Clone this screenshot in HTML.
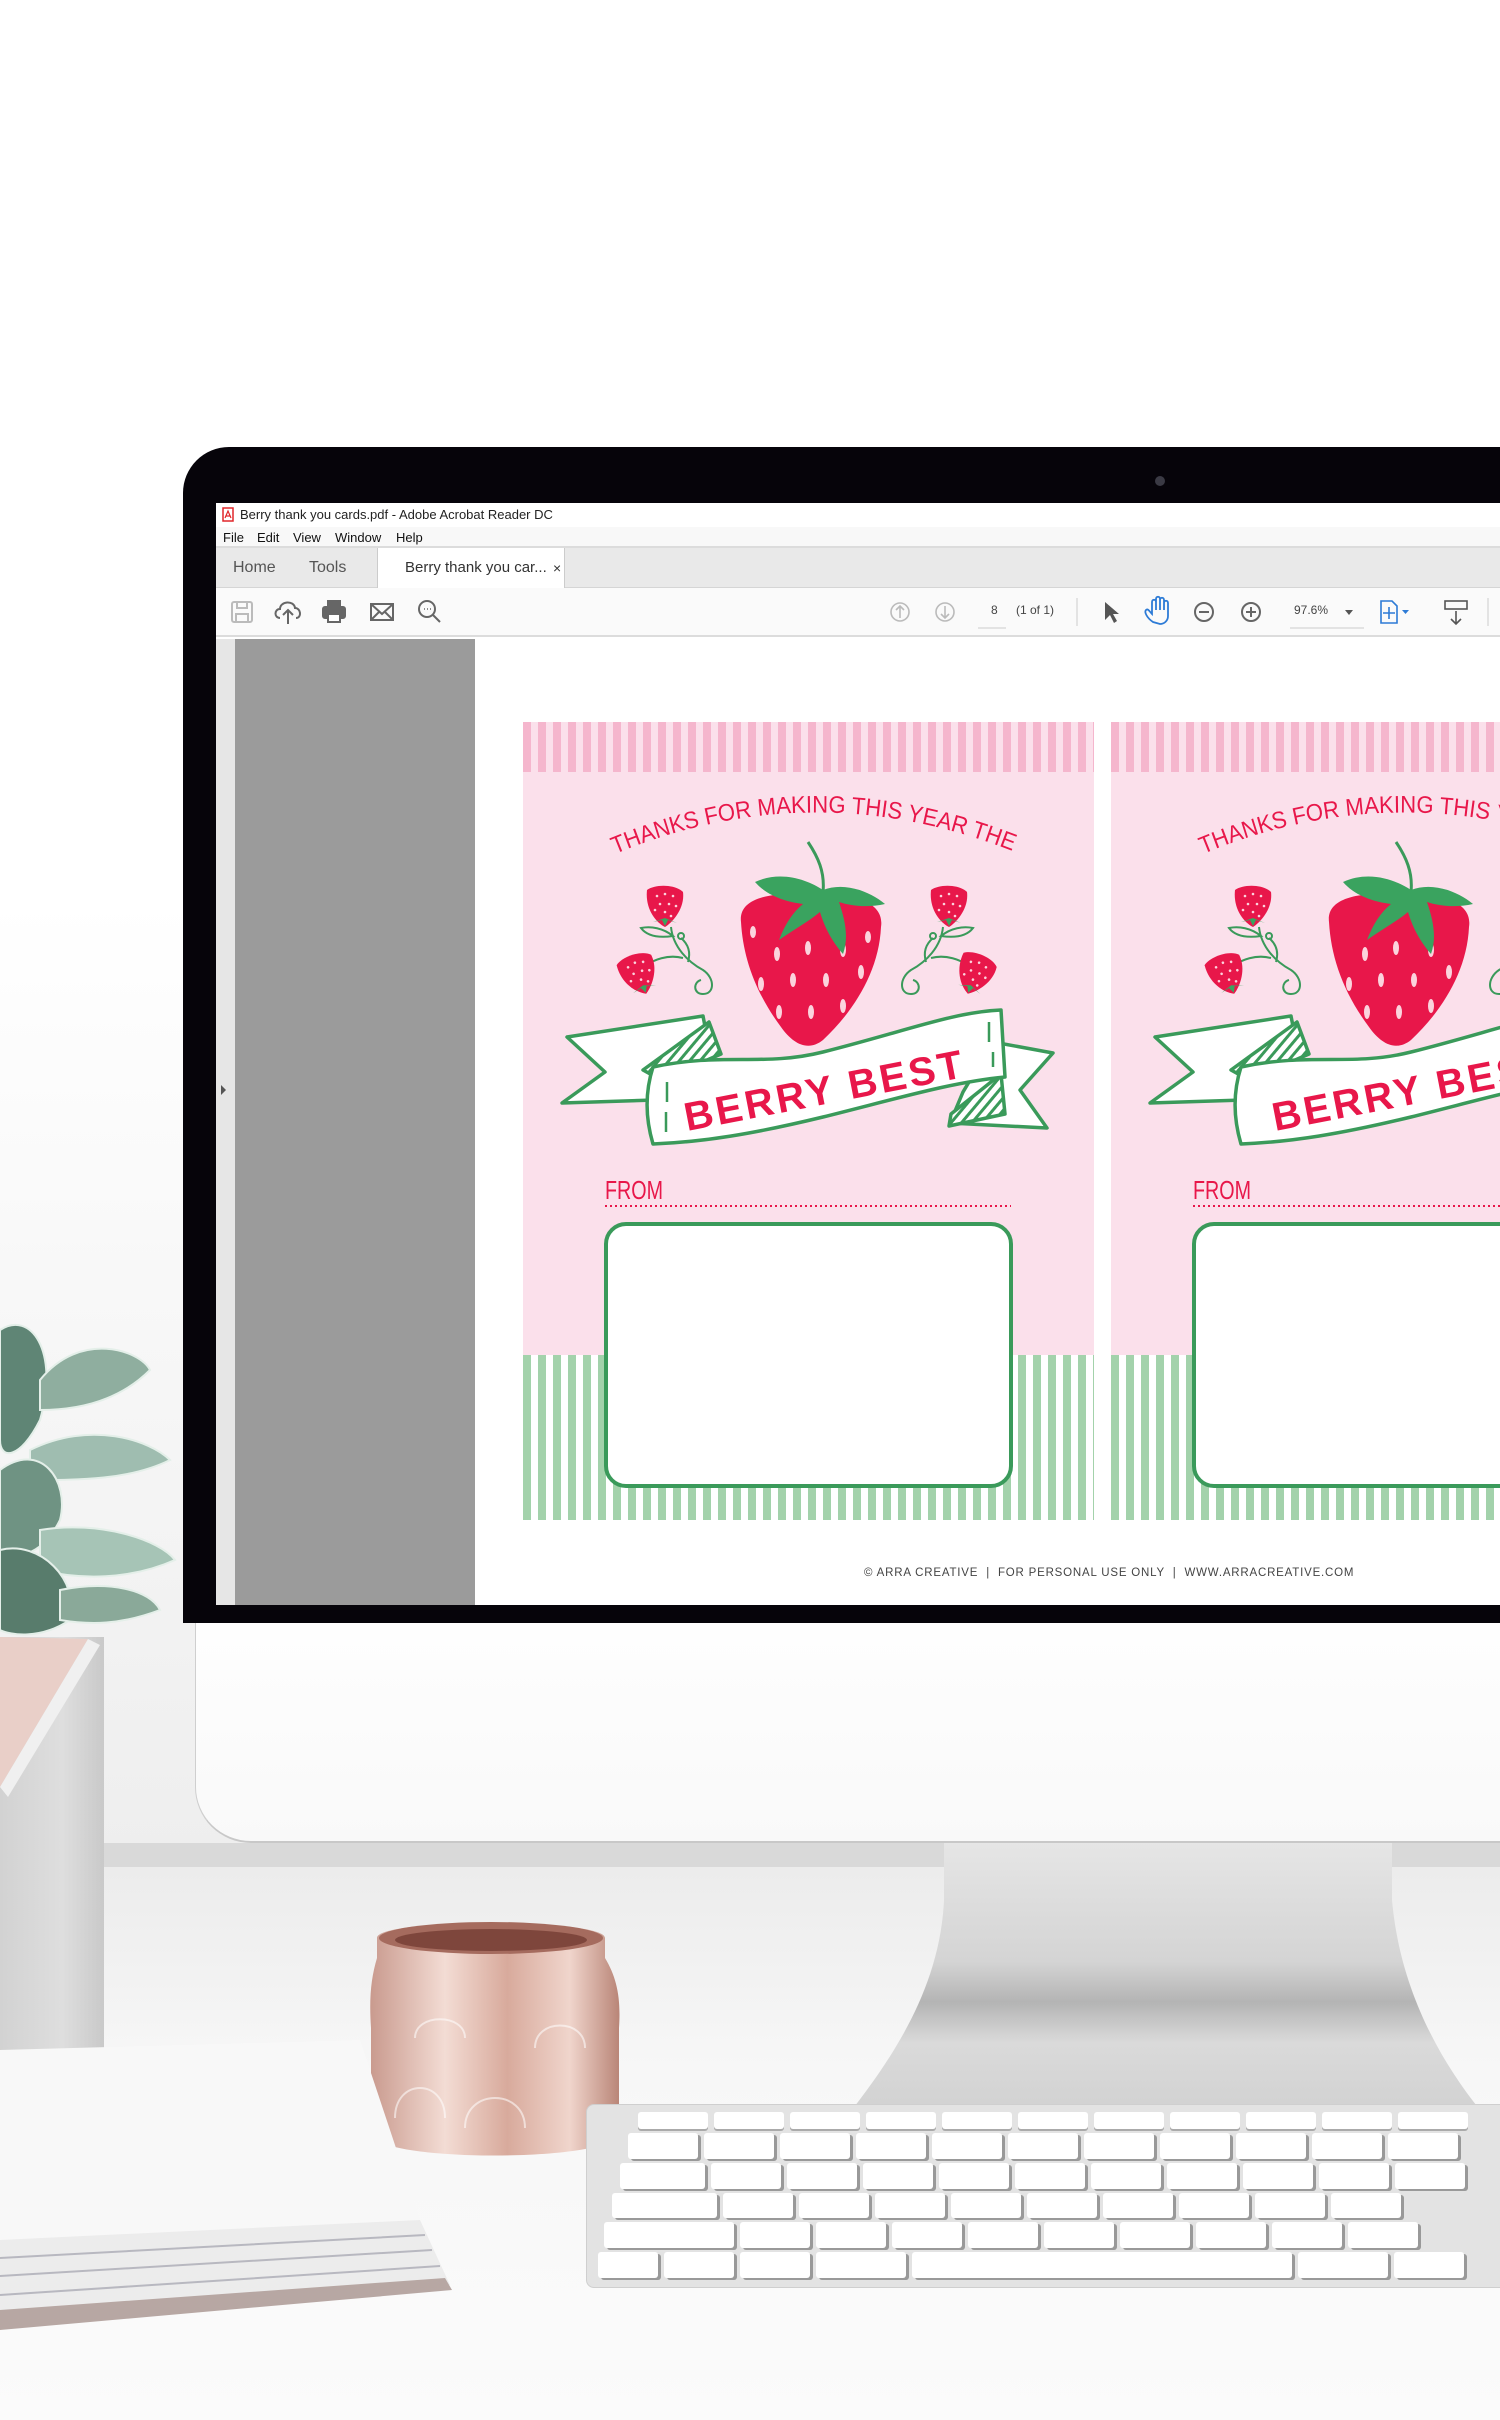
<!DOCTYPE html>
<html><head><meta charset="utf-8"><style>
*{margin:0;padding:0;box-sizing:border-box}
body{width:1500px;height:2420px;position:relative;overflow:hidden;background:#fff;font-family:"Liberation Sans",sans-serif}
.abs{position:absolute}
</style></head><body>
<div class="abs" style="left:0;top:0;width:1500px;height:1867px;background:linear-gradient(#fff 0,#fff 900px,#f4f4f4 1500px,#eeeeee 1867px)"></div>
<div class="abs" style="left:0;top:1843px;width:1500px;height:24px;background:#d9d9d9"></div>
<div class="abs" style="left:0;top:1867px;width:1500px;height:553px;background:linear-gradient(#ececec,#f7f7f7 200px,#fbfbfb)"></div>

<svg class="abs" style="left:0;top:1290px" width="200" height="360" viewBox="0 0 200 360">
<g fill="#8fae9f" stroke="#e4efe9" stroke-width="2">
<path d="M0,40 C30,20 60,60 40,130 C20,170 0,170 0,150Z" fill="#5f8575"/>
<path d="M40,90 C80,40 140,60 150,80 C120,110 80,120 40,120Z"/>
<path d="M30,160 C90,130 150,150 170,170 C130,190 80,190 30,190Z" fill="#9fbdb0"/>
<path d="M0,180 C40,150 70,190 60,230 C40,270 10,270 0,260Z" fill="#6f9383"/>
<path d="M40,240 C100,230 160,250 175,270 C130,290 80,290 40,280Z" fill="#a6c4b6"/>
<path d="M0,260 C40,250 80,290 70,330 C40,350 10,345 0,340Z" fill="#587c6c"/>
<path d="M60,300 C110,290 150,300 160,320 C120,335 90,335 60,330Z" fill="#8aa999"/>
</g></svg>
<div class="abs" style="left:0;top:1637px;width:104px;height:423px;background:linear-gradient(90deg,#d2d2d2,#dedede 60%,#c9c9c9)"></div>
<svg class="abs" style="left:0;top:1637px" width="104" height="160"><polygon points="0,0 88,2 0,150" fill="#e9cfc8"/><polygon points="88,2 100,8 8,160 0,150" fill="#f0f0f0"/></svg>

<svg class="abs" style="left:840px;top:1840px" width="660" height="280">
<defs><linearGradient id="st" x1="0" y1="0" x2="0" y2="1"><stop offset="0" stop-color="#e6e6e6"/><stop offset=".45" stop-color="#d4d4d4"/><stop offset=".6" stop-color="#b4b4b4"/><stop offset=".75" stop-color="#dadada"/><stop offset="1" stop-color="#d2d2d2"/></linearGradient></defs>
<path d="M104,0 L552,0 L552,60 C560,150 600,220 640,270 L12,270 C50,220 100,150 104,60Z" fill="url(#st)"/>
</svg>

<div class="abs" style="left:183px;top:447px;width:1400px;height:1176px;background:#06040a;border-top-left-radius:46px"></div>
<div class="abs" style="left:1155px;top:476px;width:10px;height:10px;border-radius:50%;background:#3a3a44"></div>
<div class="abs" style="left:195px;top:1623px;width:1400px;height:220px;background:linear-gradient(#fefefe,#f9f9f9);border-bottom-left-radius:56px;border-left:1px solid #cfcfcf;border-bottom:2px solid #c8c8c8"></div>

<div class="abs" style="left:216px;top:503px;width:1300px;height:1102px;background:#fff;overflow:hidden">
 <div class="abs" style="left:0;top:0;width:1300px;height:24px;background:#fff;font-size:13px;color:#222;line-height:24px">
  <svg class="abs" style="left:6px;top:4px" width="12" height="15"><rect x="1" y="1" width="10" height="13" fill="#fff" stroke="#e0262a" stroke-width="1.5"/><path d="M3,11 L6,4 L9,11 M4,9 L8,9" stroke="#e0262a" fill="none" stroke-width="1.2"/></svg>
  <span class="abs" style="left:24px">Berry thank you cards.pdf - Adobe Acrobat Reader DC</span>
 </div>
 <div class="abs" style="left:0;top:24px;width:1300px;height:21px;background:#f8f8f8;font-size:13px;color:#111;line-height:21px;border-bottom:2px solid #dcdcdc">
  <span class="abs" style="left:7px">File</span><span class="abs" style="left:41px">Edit</span><span class="abs" style="left:77px">View</span><span class="abs" style="left:119px">Window</span><span class="abs" style="left:180px">Help</span>
 </div>
 <div class="abs" style="left:0;top:45px;width:1300px;height:40px;background:#e9e9e9;font-size:16px;color:#555;line-height:40px;border-bottom:1px solid #d5d5d5">
  <span class="abs" style="left:17px">Home</span><span class="abs" style="left:93px">Tools</span>
  <div class="abs" style="left:161px;top:0;width:188px;height:41px;background:#fff;border-left:1px solid #ccc;border-right:1px solid #ccc;font-size:15px;color:#333"><span class="abs" style="left:27px">Berry thank you car...</span><span class="abs" style="left:175px;font-size:14px">×</span></div>
 </div>
 <div class="abs" style="left:0;top:85px;width:1300px;height:49px;background:#fafafa;border-bottom:2px solid #dcdcdc">
  <svg class="abs" style="left:0;top:0" width="1300" height="49" fill="none" stroke="#666" stroke-width="2">
   <g transform="translate(26,24)" stroke="#bbb"><rect x="-10" y="-10" width="20" height="20" rx="2"/><rect x="-5" y="-10" width="10" height="6"/><rect x="-6" y="2" width="12" height="8"/></g>
   <g transform="translate(72,24)"><path d="M-8,6 C-14,6 -14,-3 -8,-3 C-8,-11 6,-12 7,-4 C13,-4 14,6 8,6"/><path d="M0,12 L0,-2 M-5,3 L0,-2 L5,3"/></g>
   <g transform="translate(118,24)" fill="#666"><rect x="-6" y="-11" width="12" height="5"/><rect x="-11" y="-5" width="22" height="11" rx="2"/><rect x="-6" y="2" width="12" height="8" fill="#fff"/></g>
   <g transform="translate(166,24)"><rect x="-11" y="-8" width="22" height="16"/><path d="M-11,-8 L0,2 L11,-8 M-11,8 L-3,0 M11,8 L3,0"/></g>
   <g transform="translate(213,23)"><circle cx="-2" cy="-2" r="8"/><path d="M4,4 L11,11"/><path d="M-5,-2h1M-2,-2h1M1,-2h1" stroke-width="1.5"/></g>
   <g stroke="#bbb" stroke-width="1.6"><circle cx="684" cy="24" r="9"/><path d="M684,30 L684,18 M680,22 L684,18 L688,22"/><circle cx="729" cy="24" r="9"/><path d="M729,18 L729,30 M725,26 L729,30 L733,26"/></g>
   <line x1="762" y1="40" x2="790" y2="40" stroke="#ccc" stroke-width="1"/>
   <line x1="861" y1="10" x2="861" y2="38" stroke="#ccc" stroke-width="1"/>
   <path d="M889,14 L889,32 L894,27 L898,35 L901,33 L897,26 L903,26Z" fill="#555" stroke="none"/>
   <path d="M937,34 C931,30 928,24 930,22 C932,20 934,24 936,26 L936,14 C936,11 940,11 940,14 L940,22 L940,11 C940,8 944,8 944,11 L944,22 L944,12 C944,9 948,9 948,12 L948,22 L948,15 C948,12 952,12 952,15 L952,28 C952,33 948,36 944,36Z" stroke="#2d7bd6" stroke-width="1.8"/>
   <circle cx="988" cy="24" r="9"/><path d="M983,24 L993,24"/>
   <circle cx="1035" cy="24" r="9"/><path d="M1030,24 L1040,24 M1035,19 L1035,29"/>
   <line x1="1074" y1="40" x2="1148" y2="40" stroke="#ccc" stroke-width="1"/>
   <path d="M1129,22 L1137,22 L1133,27Z" fill="#555" stroke="none"/>
   <g stroke="#2d7bd6" stroke-width="1.6"><path d="M1165,13 L1176,13 L1181,18 L1181,35 L1165,35Z"/><path d="M1173,19 L1173,31 M1167,25 L1179,25"/><path d="M1186,22 L1193,22 L1189.5,26Z" fill="#2d7bd6" stroke="none"/></g>
   <g stroke="#555" stroke-width="1.6"><rect x="1229" y="13" width="22" height="8"/><path d="M1240,23 L1240,36 M1235,31 L1240,36 L1245,31"/></g>
   <line x1="1272" y1="10" x2="1272" y2="38" stroke="#ccc" stroke-width="1"/>
  </svg>
  <span class="abs" style="left:775px;top:15px;font-size:12px;color:#444">8</span>
  <span class="abs" style="left:800px;top:15px;font-size:12px;color:#444">(1 of 1)</span>
  <span class="abs" style="left:1078px;top:15px;font-size:12px;color:#444">97.6%</span>
 </div>
 <div class="abs" style="left:0;top:136px;width:19px;height:970px;background:#e6e6e6"></div>
 <div class="abs" style="left:5px;top:582px;width:0;height:0;border-top:5px solid transparent;border-bottom:5px solid transparent;border-left:5px solid #555"></div>
 <div class="abs" style="left:19px;top:136px;width:240px;height:970px;background:#9b9b9b"></div>
</div>

<svg class="abs" style="left:523px;top:722px" width="571" height="798" viewBox="0 0 571 798" id="card1">
<defs>
<pattern id="pk" width="15" height="50" patternUnits="userSpaceOnUse"><rect width="15" height="50" fill="#fbe0eb"/><rect width="8" height="50" fill="#f5b6cd"/></pattern>
<pattern id="gr" width="15" height="170" patternUnits="userSpaceOnUse"><rect width="15" height="170" fill="#fff"/><rect width="8" height="170" fill="#a3d2ab"/></pattern>
<pattern id="ht" width="8" height="8" patternUnits="userSpaceOnUse" patternTransform="rotate(40)"><rect width="8" height="8" fill="#fff"/><rect width="3" height="8" fill="#3a9a5a"/></pattern>
<g id="sb"><path d="M-18,-16 C-10,-22 10,-22 18,-14 C20,2 8,16 0,21 C-10,16 -20,2 -18,-16Z" fill="#e8174a"/><g fill="#fbd3dd"><circle cx="-8" cy="-10" r="1.3"/><circle cx="0" cy="-12" r="1.3"/><circle cx="8" cy="-10" r="1.3"/><circle cx="-5" cy="-2" r="1.3"/><circle cx="4" cy="-2" r="1.3"/><circle cx="11" cy="0" r="1.3"/><circle cx="-10" cy="4" r="1.3"/><circle cx="0" cy="6" r="1.3"/><circle cx="6" cy="10" r="1.3"/></g><path d="M-12,16 L0,12 L12,17 L3,14 L0,20 L-3,14Z" fill="#3aa35f"/></g>
<g id="vine" fill="none" stroke="#3a9a5a" stroke-width="2"><path d="M148,205 C150,225 165,240 180,248 C192,256 192,272 180,272 C170,272 170,260 178,258"/><path d="M160,236 C145,232 130,238 122,244"/><path d="M150,214 C140,206 128,204 118,206 C124,214 136,216 150,214Z"/><path d="M165,240 C168,230 165,222 158,216"/><circle cx="158" cy="214" r="3"/></g>
</defs>
<rect width="571" height="633" fill="#fbe0eb"/>
<rect width="571" height="50" fill="url(#pk)"/>
<rect y="633" width="571" height="165" fill="url(#gr)"/>
<path id="arc" d="M92,132 Q290,50 492,130" fill="none"/>
<text font-family="'Liberation Sans Narrow','Liberation Sans',sans-serif" font-size="24" fill="#e8174a" textLength="408" lengthAdjust="spacingAndGlyphs"><textPath href="#arc">THANKS FOR MAKING THIS YEAR THE</textPath></text>
<use href="#vine"/><use href="#vine" transform="translate(568,0) scale(-1,1)"/>
<use href="#sb" transform="translate(142,184)"/><use href="#sb" transform="translate(116,252) rotate(-20)"/>
<use href="#sb" transform="translate(426,184)"/><use href="#sb" transform="translate(452,252) rotate(20)"/>
<path d="M285,120 C295,135 302,150 300,170" fill="none" stroke="#3a9a5a" stroke-width="3"/>
<path d="M218,200 C215,175 250,170 287,172 C330,170 362,180 358,205 C356,250 330,290 300,318 C285,330 270,322 258,305 C232,270 220,235 218,200Z" fill="#e8174a"/>
<g fill="#fbd3dd"><ellipse cx="254" cy="232" rx="3" ry="7"/><ellipse cx="285" cy="226" rx="3" ry="7"/><ellipse cx="320" cy="228" rx="3" ry="7"/><ellipse cx="238" cy="262" rx="3" ry="7"/><ellipse cx="270" cy="258" rx="3" ry="7"/><ellipse cx="303" cy="258" rx="3" ry="7"/><ellipse cx="338" cy="250" rx="3" ry="7"/><ellipse cx="256" cy="290" rx="3" ry="7"/><ellipse cx="288" cy="290" rx="3" ry="7"/><ellipse cx="320" cy="284" rx="3" ry="7"/><ellipse cx="230" cy="210" rx="3" ry="6"/><ellipse cx="345" cy="215" rx="3" ry="6"/></g>
<path d="M232,160 C258,148 285,158 300,168 C320,160 345,168 362,182 C345,186 328,184 316,180 C322,198 326,215 320,232 C306,216 300,200 297,190 C285,200 270,208 256,218 C262,202 270,190 280,182 C265,180 245,175 232,160Z" fill="#3aa35f"/>
<g stroke="#3a9a5a" stroke-width="3.5" stroke-linejoin="round">
<path d="M44,315 L180,294 L196,376 L39,381 L82,350Z" fill="#fff"/>
<path d="M470,320 L530,331 L497,368 L524,406 L427,401 L440,370Z" fill="#fff"/>
<path d="M120,348 L186,300 L198,332 L138,358Z" fill="url(#ht)"/>
<path d="M428,392 L478,352 L482,392 L426,404Z" fill="url(#ht)"/>
<path d="M130,345 C200,330 240,345 300,330 C380,310 430,290 478,288 L482,355 C430,360 380,375 300,395 C230,412 180,420 130,422 C122,395 122,370 130,345Z" fill="#fff"/>
<path d="M144,360 L144,380 M143,390 L143,410 M466,300 L466,320 M470,330 L470,345" fill="none" stroke-width="2.5"/>
</g>
<text x="302" y="382" transform="rotate(-11 302 370)" text-anchor="middle" font-family="'Liberation Sans',sans-serif" font-weight="bold" font-size="40" letter-spacing="3" fill="#e8174a">BERRY BEST</text>
<text x="82" y="477" font-family="'Liberation Sans Narrow','Liberation Sans',sans-serif" font-size="26" fill="#e8174a" textLength="58" lengthAdjust="spacingAndGlyphs">FROM</text>
<line x1="82" y1="484" x2="488" y2="484" stroke="#e8174a" stroke-width="2" stroke-dasharray="2 3"/>
<rect x="83" y="502" width="405" height="262" rx="20" fill="#fff" stroke="#3a9a5a" stroke-width="4"/>
</svg>
<div class="abs" style="left:1111px;top:722px;width:389px;height:798px;overflow:hidden">
<svg width="571" height="798" viewBox="0 0 571 798">
<rect width="571" height="633" fill="#fbe0eb"/>
<rect width="571" height="50" fill="url(#pk)"/>
<rect y="633" width="571" height="165" fill="url(#gr)"/>
<text font-family="'Liberation Sans Narrow','Liberation Sans',sans-serif" font-size="24" fill="#e8174a" textLength="408" lengthAdjust="spacingAndGlyphs"><textPath href="#arc">THANKS FOR MAKING THIS YEAR THE</textPath></text>
<use href="#vine"/><use href="#vine" transform="translate(568,0) scale(-1,1)"/>
<use href="#sb" transform="translate(142,184)"/><use href="#sb" transform="translate(116,252) rotate(-20)"/>
<use href="#sb" transform="translate(426,184)"/>
<path d="M285,120 C295,135 302,150 300,170" fill="none" stroke="#3a9a5a" stroke-width="3"/>
<path d="M218,200 C215,175 250,170 287,172 C330,170 362,180 358,205 C356,250 330,290 300,318 C285,330 270,322 258,305 C232,270 220,235 218,200Z" fill="#e8174a"/>
<g fill="#fbd3dd"><ellipse cx="254" cy="232" rx="3" ry="7"/><ellipse cx="285" cy="226" rx="3" ry="7"/><ellipse cx="320" cy="228" rx="3" ry="7"/><ellipse cx="238" cy="262" rx="3" ry="7"/><ellipse cx="270" cy="258" rx="3" ry="7"/><ellipse cx="303" cy="258" rx="3" ry="7"/><ellipse cx="338" cy="250" rx="3" ry="7"/><ellipse cx="256" cy="290" rx="3" ry="7"/><ellipse cx="288" cy="290" rx="3" ry="7"/><ellipse cx="320" cy="284" rx="3" ry="7"/></g>
<path d="M232,160 C258,148 285,158 300,168 C320,160 345,168 362,182 C345,186 328,184 316,180 C322,198 326,215 320,232 C306,216 300,200 297,190 C285,200 270,208 256,218 C262,202 270,190 280,182 C265,180 245,175 232,160Z" fill="#3aa35f"/>
<g stroke="#3a9a5a" stroke-width="3.5" stroke-linejoin="round">
<path d="M44,315 L180,294 L196,376 L39,381 L82,350Z" fill="#fff"/>
<path d="M120,348 L186,300 L198,332 L138,358Z" fill="url(#ht)"/>
<path d="M130,345 C200,330 240,345 300,330 C380,310 430,290 478,288 L482,355 C430,360 380,375 300,395 C230,412 180,420 130,422 C122,395 122,370 130,345Z" fill="#fff"/>
</g>
<text x="302" y="382" transform="rotate(-11 302 370)" text-anchor="middle" font-family="'Liberation Sans',sans-serif" font-weight="bold" font-size="40" letter-spacing="3" fill="#e8174a">BERRY BEST</text>
<text x="82" y="477" font-family="'Liberation Sans Narrow','Liberation Sans',sans-serif" font-size="26" fill="#e8174a" textLength="58" lengthAdjust="spacingAndGlyphs">FROM</text>
<line x1="82" y1="484" x2="571" y2="484" stroke="#e8174a" stroke-width="2" stroke-dasharray="2 3"/>
<rect x="83" y="502" width="405" height="262" rx="20" fill="#fff" stroke="#3a9a5a" stroke-width="4"/>
</svg></div>
<div class="abs" style="left:864px;top:1567px;font-size:11.5px;color:#444;letter-spacing:.8px;white-space:nowrap">© ARRA CREATIVE &nbsp;|&nbsp; FOR PERSONAL USE ONLY &nbsp;|&nbsp; WWW.ARRACREATIVE.COM</div>

<svg class="abs" style="left:355px;top:1918px" width="275" height="250">
<defs><linearGradient id="jr" x1="0" x2="1"><stop offset="0" stop-color="#c99a8e"/><stop offset=".3" stop-color="#f3dcd4"/><stop offset=".55" stop-color="#d8aa9c"/><stop offset=".8" stop-color="#f0d5cc"/><stop offset="1" stop-color="#b98577"/></linearGradient></defs>
<path d="M22,40 L22,20 C22,0 250,0 250,20 L250,40 C262,60 266,80 264,110 L264,215 C264,245 16,245 16,215 L16,110 C14,80 16,60 22,40Z" fill="url(#jr)"/>
<ellipse cx="136" cy="20" rx="112" ry="16" fill="#a56b5e"/>
<ellipse cx="136" cy="22" rx="96" ry="11" fill="#7e463c"/>
<g fill="none" stroke="#fff" stroke-opacity=".55" stroke-width="2"><path d="M40,200 C40,160 90,160 90,200 M110,210 C110,170 170,170 170,210 M180,130 C180,100 230,100 230,130 M60,120 C60,95 110,95 110,120"/></g>
</svg>

<svg class="abs" style="left:0;top:2040px" width="470" height="300">
<path d="M0,10 L360,0 L420,180 L0,200Z" fill="#f8f8f8"/>
<path d="M0,200 L420,180 L450,245 L0,280Z" fill="#ececec"/>
<g stroke="#b8b8c0" stroke-width="2"><path d="M0,218 L425,195 M0,236 L432,210 M0,255 L440,226"/></g>
<path d="M0,270 L445,238 L452,250 L0,290Z" fill="#b7a7a3"/>
</svg>

<div class="abs" style="left:586px;top:2104px;width:940px;height:184px;background:#e3e3e3;border-radius:8px;border:1px solid #cfcfcf"></div>
<div class="abs" style="left:598px;top:2112px;width:920px;height:166px;display:flex;flex-direction:column;gap:4px">
 <div style="display:flex;gap:6px;height:20px;padding-left:40px"><div style="flex:0 0 70px;background:#fff;border-radius:3px;box-shadow:0 2px 0 #aaa"></div><div style="flex:0 0 70px;background:#fff;border-radius:3px;box-shadow:0 2px 0 #aaa"></div><div style="flex:0 0 70px;background:#fff;border-radius:3px;box-shadow:0 2px 0 #aaa"></div><div style="flex:0 0 70px;background:#fff;border-radius:3px;box-shadow:0 2px 0 #aaa"></div><div style="flex:0 0 70px;background:#fff;border-radius:3px;box-shadow:0 2px 0 #aaa"></div><div style="flex:0 0 70px;background:#fff;border-radius:3px;box-shadow:0 2px 0 #aaa"></div><div style="flex:0 0 70px;background:#fff;border-radius:3px;box-shadow:0 2px 0 #aaa"></div><div style="flex:0 0 70px;background:#fff;border-radius:3px;box-shadow:0 2px 0 #aaa"></div><div style="flex:0 0 70px;background:#fff;border-radius:3px;box-shadow:0 2px 0 #aaa"></div><div style="flex:0 0 70px;background:#fff;border-radius:3px;box-shadow:0 2px 0 #aaa"></div><div style="flex:0 0 70px;background:#fff;border-radius:3px;box-shadow:0 2px 0 #aaa"></div></div>
 <div style="display:flex;gap:6px;height:30px;padding-left:30px"><div style="flex:0 0 70px;background:#fff;border-radius:3px;box-shadow:3px 2px 0 #999"></div><div style="flex:0 0 70px;background:#fff;border-radius:3px;box-shadow:3px 2px 0 #999"></div><div style="flex:0 0 70px;background:#fff;border-radius:3px;box-shadow:3px 2px 0 #999"></div><div style="flex:0 0 70px;background:#fff;border-radius:3px;box-shadow:3px 2px 0 #999"></div><div style="flex:0 0 70px;background:#fff;border-radius:3px;box-shadow:3px 2px 0 #999"></div><div style="flex:0 0 70px;background:#fff;border-radius:3px;box-shadow:3px 2px 0 #999"></div><div style="flex:0 0 70px;background:#fff;border-radius:3px;box-shadow:3px 2px 0 #999"></div><div style="flex:0 0 70px;background:#fff;border-radius:3px;box-shadow:3px 2px 0 #999"></div><div style="flex:0 0 70px;background:#fff;border-radius:3px;box-shadow:3px 2px 0 #999"></div><div style="flex:0 0 70px;background:#fff;border-radius:3px;box-shadow:3px 2px 0 #999"></div><div style="flex:0 0 70px;background:#fff;border-radius:3px;box-shadow:3px 2px 0 #999"></div></div>
 <div style="display:flex;gap:6px;height:30px;padding-left:22px"><div style="flex:0 0 85px;background:#fff;border-radius:3px;box-shadow:3px 2px 0 #999"></div><div style="flex:0 0 70px;background:#fff;border-radius:3px;box-shadow:3px 2px 0 #999"></div><div style="flex:0 0 70px;background:#fff;border-radius:3px;box-shadow:3px 2px 0 #999"></div><div style="flex:0 0 70px;background:#fff;border-radius:3px;box-shadow:3px 2px 0 #999"></div><div style="flex:0 0 70px;background:#fff;border-radius:3px;box-shadow:3px 2px 0 #999"></div><div style="flex:0 0 70px;background:#fff;border-radius:3px;box-shadow:3px 2px 0 #999"></div><div style="flex:0 0 70px;background:#fff;border-radius:3px;box-shadow:3px 2px 0 #999"></div><div style="flex:0 0 70px;background:#fff;border-radius:3px;box-shadow:3px 2px 0 #999"></div><div style="flex:0 0 70px;background:#fff;border-radius:3px;box-shadow:3px 2px 0 #999"></div><div style="flex:0 0 70px;background:#fff;border-radius:3px;box-shadow:3px 2px 0 #999"></div><div style="flex:0 0 70px;background:#fff;border-radius:3px;box-shadow:3px 2px 0 #999"></div></div>
 <div style="display:flex;gap:6px;height:30px;padding-left:14px"><div style="flex:0 0 105px;background:#fff;border-radius:3px;box-shadow:3px 2px 0 #999"></div><div style="flex:0 0 70px;background:#fff;border-radius:3px;box-shadow:3px 2px 0 #999"></div><div style="flex:0 0 70px;background:#fff;border-radius:3px;box-shadow:3px 2px 0 #999"></div><div style="flex:0 0 70px;background:#fff;border-radius:3px;box-shadow:3px 2px 0 #999"></div><div style="flex:0 0 70px;background:#fff;border-radius:3px;box-shadow:3px 2px 0 #999"></div><div style="flex:0 0 70px;background:#fff;border-radius:3px;box-shadow:3px 2px 0 #999"></div><div style="flex:0 0 70px;background:#fff;border-radius:3px;box-shadow:3px 2px 0 #999"></div><div style="flex:0 0 70px;background:#fff;border-radius:3px;box-shadow:3px 2px 0 #999"></div><div style="flex:0 0 70px;background:#fff;border-radius:3px;box-shadow:3px 2px 0 #999"></div><div style="flex:0 0 70px;background:#fff;border-radius:3px;box-shadow:3px 2px 0 #999"></div></div>
 <div style="display:flex;gap:6px;height:30px;padding-left:6px"><div style="flex:0 0 130px;background:#fff;border-radius:3px;box-shadow:3px 2px 0 #999"></div><div style="flex:0 0 70px;background:#fff;border-radius:3px;box-shadow:3px 2px 0 #999"></div><div style="flex:0 0 70px;background:#fff;border-radius:3px;box-shadow:3px 2px 0 #999"></div><div style="flex:0 0 70px;background:#fff;border-radius:3px;box-shadow:3px 2px 0 #999"></div><div style="flex:0 0 70px;background:#fff;border-radius:3px;box-shadow:3px 2px 0 #999"></div><div style="flex:0 0 70px;background:#fff;border-radius:3px;box-shadow:3px 2px 0 #999"></div><div style="flex:0 0 70px;background:#fff;border-radius:3px;box-shadow:3px 2px 0 #999"></div><div style="flex:0 0 70px;background:#fff;border-radius:3px;box-shadow:3px 2px 0 #999"></div><div style="flex:0 0 70px;background:#fff;border-radius:3px;box-shadow:3px 2px 0 #999"></div><div style="flex:0 0 70px;background:#fff;border-radius:3px;box-shadow:3px 2px 0 #999"></div></div>
 <div style="display:flex;gap:6px;height:30px;padding-left:0"><div style="flex:0 0 60px;background:#fff;border-radius:3px;box-shadow:3px 2px 0 #999"></div><div style="flex:0 0 70px;background:#fff;border-radius:3px;box-shadow:3px 2px 0 #999"></div><div style="flex:0 0 70px;background:#fff;border-radius:3px;box-shadow:3px 2px 0 #999"></div><div style="flex:0 0 90px;background:#fff;border-radius:3px;box-shadow:3px 2px 0 #999"></div><div style="flex:0 0 380px;background:#fff;border-radius:3px;box-shadow:3px 2px 0 #999"></div><div style="flex:0 0 90px;background:#fff;border-radius:3px;box-shadow:3px 2px 0 #999"></div><div style="flex:0 0 70px;background:#fff;border-radius:3px;box-shadow:3px 2px 0 #999"></div></div>
</div>
</body></html>
